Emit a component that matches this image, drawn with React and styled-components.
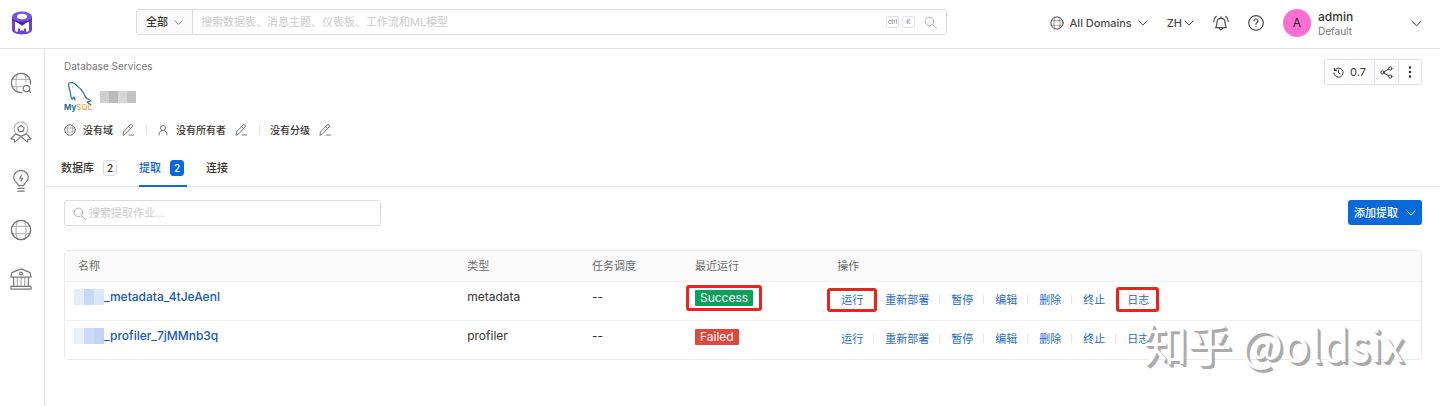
import styled, { createGlobalStyle, css } from 'styled-components';

const GlobalStyle = createGlobalStyle`
  * {
    box-sizing: border-box;
  }

  body {
    margin: 0;
    background-color: #ffffff;
    color: #37352f;
    font-family: Inter, 'Noto Sans CJK SC', sans-serif;
    font-size: 11px;
    line-height: 16px;
  }

  button,
  input {
    font: inherit;
    color: inherit;
  }

  button {
    display: flex;
    align-items: center;
    padding: 0;
    border: none;
    background: none;
    white-space: nowrap;
    cursor: pointer;
  }

  svg {
    flex-shrink: 0;
    fill: none;
    stroke: currentColor;
    stroke-linecap: round;
    stroke-linejoin: round;
  }
`;

const Page = styled.div`
  display: flex;
  flex-direction: column;
  min-height: 100vh;
`;

const Header = styled.header`
  display: flex;
  align-items: center;
  height: 49px;
  padding: 0 18px 4px 11px;
  border-bottom: 1px solid #e2e2e2;
`;

const LogoLink = styled.a`
  display: flex;
  width: 125px;
  padding-top: 2px;
`;

const GlobalSearch = styled.div`
  display: flex;
  align-items: center;
  flex: 0 1 811px;
  height: 26px;
  padding-right: 9px;
  border: 1px solid #dcdcdc;
  border-radius: 3px;
`;

const ScopeButton = styled.button`
  align-self: stretch;
  gap: 6px;
  padding: 0 9px;
  border-right: 1px solid #dcdcdc;
  background-color: #fafafa;
  font-weight: 500;

  svg {
    color: #999999;
  }
`;

const SearchInput = styled.input`
  flex: 1;
  min-width: 0;
  padding: 0 8px;
  border: none;
  outline: none;
  background: transparent;

  &::placeholder {
    color: #cccccc;
    opacity: 1;
  }
`;

const KeyHint = styled.kbd`
  min-width: 13px;
  margin-right: 3px;
  border: 1px solid #e3e4ea;
  border-radius: 2px;
  color: #777777;
  font-family: inherit;
  font-size: 6px;
  line-height: 10px;
  text-align: center;
`;

const SearchButton = styled.button`
  margin-left: 6px;
  color: #b5b5b5;
`;

const HeaderActions = styled.div`
  display: flex;
  align-items: center;
  gap: 19px;
  margin-left: auto;
  padding-top: 2px;
`;

const MenuButton = styled.button`
  gap: ${(props) => props.$gap || 6}px;
  color: #4a4a4a;
  font-weight: 500;
`;

const Avatar = styled.span`
  display: flex;
  align-items: center;
  justify-content: center;
  width: 28px;
  height: 28px;
  border-radius: 50%;
  background-color: #fb6fd3;
  color: #222222;
  font-size: 12px;
`;

const UserButton = styled.button`
  width: 139px;
  gap: 7px;
  text-align: left;

  > svg {
    margin-left: auto;
  }
`;

const UserText = styled.span`
  display: flex;
  flex-direction: column;
  padding-top: 2px;
  font-size: 12px;
  font-weight: 500;
  line-height: 14px;

  small {
    color: #777777;
    font-size: 10px;
    font-weight: 400;
  }
`;

const Body = styled.div`
  display: flex;
  flex: 1;
`;

const Sidebar = styled.nav`
  display: flex;
  flex-direction: column;
  gap: 27px;
  width: 45px;
  padding: 23px 10px;
  border-right: 1px solid #e2e2e2;
  color: #777777;

  a {
    display: flex;
    color: inherit;
  }
`;

const Main = styled.main`
  flex: 1;
  min-width: 0;
`;

const ServiceHeader = styled.section`
  display: flex;
  justify-content: space-between;
  align-items: flex-start;
  padding: 9px 18px 0 19px;
`;

const Breadcrumb = styled.a`
  color: #777777;
  font-size: 10px;
  text-decoration: none;
`;

const ServiceTitle = styled.div`
  display: flex;
  align-items: center;
  gap: 7px;
  margin-top: 8px;
`;

const Meta = styled.div`
  display: flex;
  align-items: center;
  margin-top: 10px;
`;

const MetaItem = styled.div`
  display: flex;
  align-items: center;
  gap: 7px;
  font-size: 10px;
  font-weight: 500;

  svg {
    color: #777777;
  }

  button {
    margin-left: 2px;
  }

  & + & {
    margin-left: 12px;
    padding-left: 11px;
    background: linear-gradient(#e2e2e2, #e2e2e2) left center / 1px 10px no-repeat;
  }
`;

const ToolGroup = styled.div`
  display: flex;
  height: 26px;
  margin-top: 1px;
  border: 1px solid #e2e2e2;
  border-radius: 3px;

  button {
    gap: 6px;
    padding: 0 5px;
  }

  button:first-child {
    padding: 0 8px;
  }

  button + button {
    border-left: 1px solid #e2e2e2;
  }
`;

const Tabs = styled.div`
  display: flex;
  gap: 19px;
  height: 37px;
  margin-top: 12px;
  padding-left: 16px;
  border-bottom: 1px solid #e8e8e8;
`;

const Tab = styled.button`
  gap: 9px;
  margin-bottom: -1px;
  padding-right: 3px;
  border-bottom: 2px solid transparent;
  font-weight: 500;

  ${(props) =>
    props.$active &&
    css`
      border-color: #0968da;
      color: #0968da;
    `}
`;

const TabCount = styled.span`
  width: 14px;
  border: 1px solid ${(props) => (props.$active ? '#0968da' : '#dcdcdc')};
  border-radius: 3px;
  background-color: ${(props) => (props.$active ? '#0968da' : '#ffffff')};
  color: ${(props) => (props.$active ? '#ffffff' : '#37352f')};
  font-size: 10px;
  line-height: 14px;
  text-align: center;
`;

const Content = styled.section`
  position: relative;
  padding: 13px 18px 0 19px;
`;

const Toolbar = styled.div`
  display: flex;
  justify-content: space-between;
`;

const JobSearch = styled.label`
  display: flex;
  align-items: center;
  width: 317px;
  height: 26px;
  padding-left: 8px;
  border: 1px solid #dcdcdc;
  border-radius: 3px;
  color: #b5b5b5;

  input {
    padding: 0 3px;
  }
`;

const AddButton = styled.button`
  gap: 8px;
  height: 25px;
  padding: 0 6px;
  border-radius: 3px;
  background-color: #0968da;
  color: #ffffff;
  font-weight: 500;
`;

const TableFrame = styled.div`
  margin-top: 24px;
  border: 1px solid #ebebeb;
  border-radius: 4px;
  overflow: hidden;
`;

const Table = styled.table`
  width: 100%;
  border-collapse: collapse;
  table-layout: fixed;
`;

const HeadCell = styled.th`
  width: ${(props) => props.$width};
  height: 30px;
  padding: 0 13px;
  background-color: #fafafa;
  color: #6b6b6b;
  font-weight: 400;
  text-align: left;
`;

const Cell = styled.td`
  height: 39px;
  padding: 7px 13px 0;
  border-top: 1px solid #f0f0f0;
  font-size: 12px;
  vertical-align: top;
`;

const JobLink = styled.a`
  display: flex;
  align-items: center;
  margin-left: -4px;
  color: #1359b7;
  font-weight: 500;
  text-decoration: none;
`;

const StatusLine = styled.div`
  display: flex;
  padding-top: 1px;
`;

const Status = styled.span`
  position: relative;
  padding: 0 5px;
  border-radius: 1px;
  background-color: ${(props) => (props.$failed ? '#e0483d' : '#0ba15c')};
  color: #ffffff;
  line-height: 16px;
`;

const Actions = styled.div`
  display: flex;
  padding-top: 3px;
  font-size: 11px;
`;

const ActionButton = styled.button`
  position: relative;
  margin-left: 4px;
  color: #1f6acb;

  & + & {
    margin-left: 10px;
    padding-left: 12px;
    background: linear-gradient(#e5e5e5, #e5e5e5) left center / 1px 9px no-repeat;
  }
`;

const Highlight = styled.span`
  position: absolute;
  inset: ${(props) => props.$inset};
  border: 3px solid #e8241c;
  border-radius: 3px;
  pointer-events: none;
`;

const Watermark = styled.div`
  position: absolute;
  right: 36px;
  bottom: -13px;
  color: #ffffff;
  font-family: 'Noto Sans CJK SC', sans-serif;
  font-size: 44px;
  line-height: 60px;
  text-shadow: 1px 1px 0 #ababab, 2px 2px 0 #ababab, 3px 3px 0 #ababab;
  white-space: nowrap;
  pointer-events: none;
`;

const Icon = ({ size = 12, width = 1, box = 24, children }) => (
  <svg width={size} height={size} viewBox={`0 0 ${box} ${box}`} strokeWidth={(width * box) / size} aria-hidden='true'>
    {children}
  </svg>
);

const Chevron = ({ size = 10 }) => (
  <Icon size={size}>
    <path d='M2 7l10 10L22 7' />
  </Icon>
);

const SearchIcon = () => (
  <Icon size={13}>
    <circle cx='10' cy='10' r='8' />
    <path d='M16 16l7 7' />
  </Icon>
);

const PencilIcon = () => (
  <Icon size={12}>
    <path d='M2 22l1-6L16 2q2-2 4 0t0 4L8 19zM13 5l5 5M14 22h9' />
  </Icon>
);

const GlobeIcon = ({ size, width }) => (
  <Icon size={size} width={width}>
    <circle cx='12' cy='12' r='10.5' />
    <g opacity='0.5'>
      <path d='M8 2q-3 10 0 20M16 2q3 10 0 20M2 8h20M2 16h20' />
    </g>
  </Icon>
);

const Logo = () => (
  <svg width='22' height='24' viewBox='0 0 22 24' aria-hidden='true'>
    <path d='M1 5.500v13c0 6.500 20 6.500 20 0v-13z' fill='#6a45d2' stroke='none' />
    <path d='M1 6c0 6 20 6 20 0v3L11 14 1 9z' fill='#4526a8' stroke='none' />
    <ellipse cx='11' cy='5.500' rx='10' ry='5' fill='#7856e3' stroke='none' />
    <ellipse cx='11' cy='5.500' rx='5' ry='2.800' fill='#ffffff' stroke='none' />
    <path d='M4 10.500l3 1.500 4 3 4-3 3-1.500v9.500l-3 1v-3.500h-2v2h-4v-2H7V21l-3-1z' fill='#ffffff' stroke='none' />
  </svg>
);

const MySqlLogo = () => (
  <svg width='29' height='30' viewBox='0 0 29 30' role='img' aria-label='MySQL'>
    <path
      d='M11 18l-1-3-2 2c-2-3-1-5-2-8C5 6 4 3 5 1c4-1 7 1 9 4 4 2 5 5 7 9 1 3 4 3 6 5l-4 1 4 3'
      stroke='#24708f'
      strokeWidth='1.200'
    />
    <circle cx='9' cy='5' r='0.600' fill='#24708f' stroke='none' />
    <text x='0' y='28' fontSize='8' fontWeight='700' fill='#27708f' stroke='none'>
      My<tspan fill='#eda33b' fontWeight='500'>SQL</tspan>
    </text>
  </svg>
);

const Mosaic = ({ colors, cell = 9, height = 16 }) => (
  <svg width={colors.length * cell} height={height} shapeRendering='crispEdges' aria-hidden='true'>
    {colors.map((color, index) => (
      <rect key={index} x={index * cell} y='0' width={cell} height={height} fill={color} stroke='none' />
    ))}
  </svg>
);

const sideLinks = [
  {
    label: 'Explore',
    icon: (
      <Icon size={22} width={1.2}>
        <path d='M13 22.500A10.500 10.500 0 1 1 22.500 13' />
        <path d='M8 2.500q-3 9 0 19M16 2.500q1.500 4 1.500 9M2 8h20M2 16h11' opacity='0.5' />
        <circle cx='18' cy='18' r='3.500' />
        <path d='M20.500 20.500l2 2' />
      </Icon>
    ),
  },
  {
    label: 'Quality',
    icon: (
      <Icon size={22} width={1.2}>
        <circle cx='12' cy='8.500' r='7.500' opacity='0.5' />
        <path d='M12 5l3.500 2.500-1.300 4H9.800l-1.300-4z' />
        <path d='M6 14l-5 5.500 3.500.5.5 3 7-6 7 6 .5-3 3.500-.5-5-5.500-6 3z' />
      </Icon>
    ),
  },
  {
    label: 'Insights',
    icon: (
      <Icon size={22} width={1.2}>
        <path d='M9 17c0-3-5-4-5-9a8 7.500 0 0 1 16 0c0 5-5 6-5 9zM8.500 20h7M8.500 23h7' />
        <path d='M12.500 6L10.500 9h3L12 12' />
      </Icon>
    ),
  },
  { label: 'Domains', icon: <GlobeIcon size={22} width={1.4} /> },
  {
    label: 'Govern',
    icon: (
      <Icon size={22} width={1.2}>
        <path d='M12 1l10 4 1 5H1l1-5zM1 20h22v3H1zM4 10v10M20 10v10' />
        <path d='M8 11v8M12 11v8M16 11v8' opacity='0.6' />
        <circle cx='12' cy='6' r='1.500' />
      </Icon>
    ),
  },
];

const metaItems = [
  { label: '没有域', icon: <GlobeIcon size={12} /> },
  {
    label: '没有所有者',
    icon: (
      <Icon size={12}>
        <circle cx='12' cy='8' r='5' />
        <path d='M4 22c0-6 3-9 8-9s8 3 8 9' />
      </Icon>
    ),
  },
  { label: '没有分级' },
];

const columns = [
  ['名称', '28.7%'],
  ['类型', '9.2%'],
  ['任务调度', '7.6%'],
  ['最近运行', '10.5%'],
  ['操作', 'auto'],
];

const actions = ['运行', '重新部署', '暂停', '编辑', '删除', '终止', '日志'];

const jobs = [
  {
    name: '_metadata_4tJeAenl',
    type: 'metadata',
    status: 'Success',
    colors: ['#e6edfa', '#c8d9f5', '#dce6f9'],
    highlighted: true,
  },
  {
    name: '_profiler_7jMMnb3q',
    type: 'profiler',
    status: 'Failed',
    colors: ['#e9f0fb', '#ccdcf5', '#c3d5f2'],
  },
];

const JobRow = ({ job }) => (
  <tr>
    <Cell>
      <JobLink href='#'>
        <Mosaic colors={job.colors} cell={10} />
        {job.name}
      </JobLink>
    </Cell>
    <Cell>{job.type}</Cell>
    <Cell>--</Cell>
    <Cell>
      <StatusLine>
        <Status $failed={job.status === 'Failed'}>
          {job.status}
          {job.highlighted && <Highlight $inset='-5px -9px' />}
        </Status>
      </StatusLine>
    </Cell>
    <Cell>
      <Actions>
        {actions.map((action) => (
          <ActionButton key={action} type='button'>
            {action}
            {job.highlighted && action === '运行' && <Highlight $inset='-4px -14px' />}
            {job.highlighted && action === '日志' && <Highlight $inset='-5px -10px -4px 1px' />}
          </ActionButton>
        ))}
      </Actions>
    </Cell>
  </tr>
);

const App = () => {
  return (
    <>
      <GlobalStyle />
      <Page>
        <Header>
          <LogoLink href='#' aria-label='Home'>
            <Logo />
          </LogoLink>
          <GlobalSearch>
            <ScopeButton type='button'>
              全部
              <Chevron size={9} />
            </ScopeButton>
            <SearchInput aria-label='搜索' placeholder='搜索数据表、消息主题、仪表板、工作流和ML模型' />
            <KeyHint>ctrl</KeyHint>
            <KeyHint>K</KeyHint>
            <SearchButton type='button' aria-label='搜索'>
              <SearchIcon />
            </SearchButton>
          </GlobalSearch>
          <HeaderActions>
            <MenuButton type='button'>
              <GlobeIcon size={14} />
              All Domains
              <Chevron />
            </MenuButton>
            <MenuButton type='button' $gap={2}>
              ZH
              <Chevron />
            </MenuButton>
            <MenuButton type='button' aria-label='Notifications'>
              <Icon size={16} width={1.2}>
                <path d='M4 19c2-3 2-5 2-8 0-4 2-6 6-6s6 2 6 6c0 3 0 5 2 8zM9.500 20q2.500 5 5 0M12 5V2.500M5 2Q1 5 1 10M19 2q4 3 4 8' />
              </Icon>
            </MenuButton>
            <MenuButton type='button' aria-label='Help'>
              <Icon size={16} width={1.2}>
                <circle cx='12' cy='12' r='11' />
                <path d='M9 9c0-4 6-4 6 0 0 2-3 2-3 5M12 17v.5' />
              </Icon>
            </MenuButton>
            <UserButton type='button'>
              <Avatar>A</Avatar>
              <UserText>
                admin
                <small>Default</small>
              </UserText>
              <Chevron size={11} />
            </UserButton>
          </HeaderActions>
        </Header>
        <Body>
          <Sidebar>
            {sideLinks.map((link) => (
              <a key={link.label} href='#' aria-label={link.label}>
                {link.icon}
              </a>
            ))}
          </Sidebar>
          <Main>
            <ServiceHeader>
              <div>
                <Breadcrumb href='#'>Database Services</Breadcrumb>
                <ServiceTitle>
                  <MySqlLogo />
                  <Mosaic colors={['#cfcfcf', '#bababa', '#d6d6d6', '#c2c2c2']} height={12} />
                </ServiceTitle>
                <Meta>
                  {metaItems.map((item) => (
                    <MetaItem key={item.label}>
                      {item.icon}
                      {item.label}
                      <button type='button' aria-label={`编辑 ${item.label}`}>
                        <PencilIcon />
                      </button>
                    </MetaItem>
                  ))}
                </Meta>
              </div>
              <ToolGroup>
                <button type='button'>
                  <Icon size={11}>
                    <path d='M3 8a10 10 0 1 1-1 5M3 3v5h5M12 7v6l4 2' />
                  </Icon>
                  0.7
                </button>
                <button type='button' aria-label='Share'>
                  <Icon size={13}>
                    <circle cx='4.500' cy='12' r='3' />
                    <circle cx='19' cy='4.500' r='3' />
                    <circle cx='19' cy='19.500' r='3' />
                    <path d='M7.500 10.500L16 6M7.500 13.500L16 18' />
                  </Icon>
                </button>
                <button type='button' aria-label='More'>
                  <Icon size={12} width={2.5}>
                    <path d='M12 3v.1M12 12v.1M12 21v.1' />
                  </Icon>
                </button>
              </ToolGroup>
            </ServiceHeader>
            <Tabs>
              <Tab type='button'>
                数据库 <TabCount>2</TabCount>
              </Tab>
              <Tab type='button' $active>
                提取 <TabCount $active>2</TabCount>
              </Tab>
              <Tab type='button'>连接</Tab>
            </Tabs>
            <Content>
              <Toolbar>
                <JobSearch>
                  <SearchIcon />
                  <SearchInput aria-label='搜索提取作业' placeholder='搜索提取作业...' />
                </JobSearch>
                <AddButton type='button'>
                  添加提取
                  <Chevron />
                </AddButton>
              </Toolbar>
              <TableFrame>
                <Table>
                  <thead>
                    <tr>
                      {columns.map(([label, width]) => (
                        <HeadCell key={label} $width={width}>
                          {label}
                        </HeadCell>
                      ))}
                    </tr>
                  </thead>
                  <tbody>
                    {jobs.map((job) => (
                      <JobRow key={job.name} job={job} />
                    ))}
                  </tbody>
                </Table>
              </TableFrame>
              <Watermark>知乎 @oldsix</Watermark>
            </Content>
          </Main>
        </Body>
      </Page>
    </>
  );
};

export default App;
